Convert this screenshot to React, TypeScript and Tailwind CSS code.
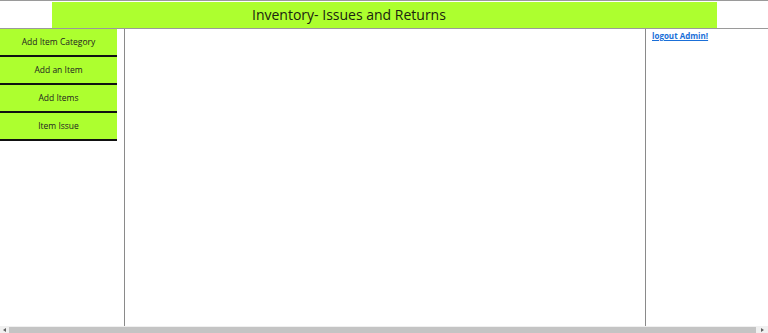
import React from "react";

export default function App() {
  const items = ["Add Item Category", "Add an Item", "Add Items", "Item Issue"];
  return (
    <div className="w-[768px] h-[333px] bg-white flex flex-col overflow-hidden" style={{ fontFamily: '"Open Sans", "Noto Sans", sans-serif' }}>
      <div className="h-[29px] border-t border-b border-[#9a9a9a] flex shrink-0">
        <div className="w-[52px]" />
        <div className="w-[665px] mt-[1px] bg-[#adff2f] flex items-center pl-[200px] text-[14px] font-medium text-[#1a2410] leading-none">
          Inventory- Issues and Returns
        </div>
        <div className="flex-1" />
      </div>
      <div className="flex flex-1 min-h-0">
        <div className="w-[125px] border-r border-[#8a8a8a] flex flex-col">
          {items.map((t) => (
            <div key={t} className="w-[117px] h-[28px] bg-[#adff2f] border-b-2 border-[#111] flex items-center justify-center text-[8.5px] text-[#222] pt-[1px]">
              {t}
            </div>
          ))}
        </div>
        <div className="w-[521px] border-r border-[#8a8a8a]" />
        <div className="flex-1 pl-[6px] pt-[2px] leading-none">
          <a href="#" className="block text-[8px] font-bold text-[#1a6fd8] underline leading-[10px]">
            logout Admin!
          </a>
        </div>
      </div>
      <div className="h-[7px] bg-[#f0f0f0] flex items-center shrink-0">
        <div className="w-[9px] flex items-center justify-center">
          <div className="w-0 h-0 border-y-[2px] border-y-transparent border-r-[3px] border-r-[#606060]" />
        </div>
        <div className="flex-1 h-[6px] bg-[#c4c4c4]" />
        <div className="w-[12px] flex items-center justify-center">
          <div className="w-0 h-0 border-y-[2px] border-y-transparent border-l-[3px] border-l-[#606060]" />
        </div>
      </div>
    </div>
  );
}
